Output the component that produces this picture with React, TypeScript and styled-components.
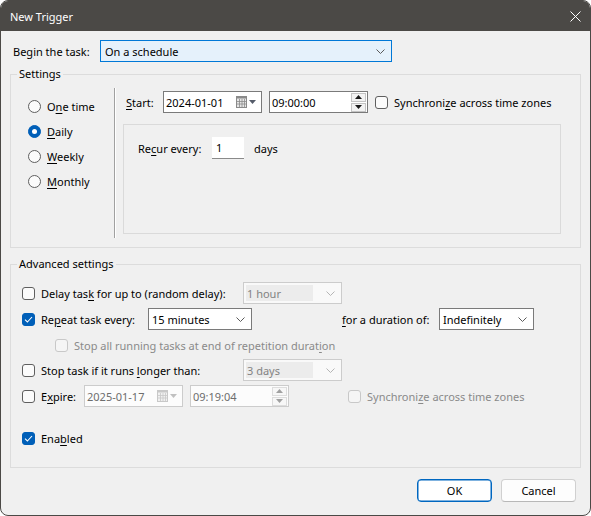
import React from 'react';
import styled, { createGlobalStyle, css } from 'styled-components';

const Global = createGlobalStyle`
  html, body { margin: 0; padding: 0; background: #ffffff; }
  body { font-family: "Noto Sans", "Segoe UI", sans-serif; font-size: 11px; color: #000; }
  * { box-sizing: border-box; }
`;

const Window = styled.div`
  width: 591px;
  height: 516px;
  border: 1px solid #4b4946;
  border-radius: 8px;
  overflow: hidden;
  background: #f0f0f0;
  display: flex;
  flex-direction: column;
`;

const TitleBar = styled.div`
  height: 30px;
  background: #4b4946;
  color: #ffffff;
  display: flex;
  align-items: center;
  justify-content: space-between;
  padding: 0 9px 0 9px;
`;

const Body = styled.div`
  flex: 1;
  padding: 9px 9px 0 9px;
  display: flex;
  flex-direction: column;
`;

const Key = styled.u`
  text-decoration: underline;
  text-decoration-thickness: 1px;
  text-underline-offset: 2px;
`;

const BeginRow = styled.div`
  display: flex;
  align-items: center;
  height: 22px;
  padding-left: 3px;
`;

const Label = styled.span<{ $w?: number; $muted?: boolean; $ml?: number }>`
  display: inline-block;
  white-space: nowrap;
  ${(p) => (p.$w ? `width: ${p.$w}px; flex: none;` : '')}
  margin-left: ${(p) => p.$ml ?? 0}px;
  color: ${(p) => (p.$muted ? '#8a8a8a' : '#000')};
`;

const ComboBox = styled.div<{ $w: number; $variant: 'focus' | 'normal' | 'disabled' }>`
  width: ${(p) => p.$w}px;
  height: 22px;
  flex: none;
  display: flex;
  align-items: center;
  justify-content: space-between;
  padding: 0 6px 0 3px;
  border: 1px solid #7a7a7a;
  background: #ffffff;
  ${(p) =>
    p.$variant === 'focus' &&
    css`
      border-color: #0078d7;
      background: #e5f1fb;
      padding-left: 4px;
    `}
  ${(p) =>
    p.$variant === 'disabled' &&
    css`
      border-color: #cccccc;
      background: #f9f9f9;
      color: #838383;
      padding: 2px 6px 2px 2px;
    `}
`;

const ComboText = styled.span<{ $disabled?: boolean }>`
  white-space: nowrap;
  ${(p) =>
    p.$disabled &&
    css`
      flex: 1;
      align-self: stretch;
      display: flex;
      align-items: center;
      background: #ececec;
      padding-left: 1px;
      margin-right: 13px;
    `}
`;

const Group = styled.fieldset<{ $mt: number }>`
  margin: ${(p) => p.$mt}px 0 0 0;
  padding: 0;
  border: 1px solid #dcdcdc;
  min-width: 0;
`;

const Legend = styled.legend`
  margin-left: 6px;
  padding: 0 2px;
  line-height: 16px;
`;

const SettingsInner = styled.div`
  display: flex;
  padding: 6px 0 9px 0;
`;

const RadioColumn = styled.div`
  width: 103px;
  flex: none;
  padding: 6px 0 0 17px;
  display: flex;
  flex-direction: column;
`;

const RadioRow = styled.div`
  height: 25px;
  display: flex;
  align-items: center;
  gap: 6px;
`;

const RadioCircle = styled.span<{ $on?: boolean }>`
  width: 13px;
  height: 13px;
  flex: none;
  border-radius: 50%;
  border: 1px solid #5f5f5f;
  background: #fbfbfb;
  display: flex;
  align-items: center;
  justify-content: center;
  ${(p) =>
    p.$on &&
    css`
      border-color: #005fb8;
      background: #005fb8;
      &::after {
        content: '';
        width: 5px;
        height: 5px;
        border-radius: 50%;
        background: #ffffff;
      }
    `}
`;

const VSeparator = styled.div`
  width: 2px;
  height: 150px;
  flex: none;
  border-left: 1px solid #a0a0a0;
  border-right: 1px solid #ffffff;
`;

const RightColumn = styled.div`
  flex: 1;
  display: flex;
  flex-direction: column;
  padding: 3px 0 0 10px;
`;

const StartRow = styled.div`
  display: flex;
  align-items: center;
  height: 22px;
`;

const FieldBox = styled.div<{ $w: number; $disabled?: boolean; $ml?: number }>`
  width: ${(p) => p.$w}px;
  height: 22px;
  flex: none;
  margin-left: ${(p) => p.$ml ?? 0}px;
  display: flex;
  align-items: center;
  justify-content: space-between;
  padding: 0 1px 0 2px;
  background: #ffffff;
  border: 1px solid #7a7a7a;
  ${(p) =>
    p.$disabled &&
    css`
      border-color: #cccccc;
      color: #6d6d6d;
      background: #fcfcfc;
    `}
`;

const CalendarButton = styled.span`
  display: flex;
  align-items: center;
  gap: 2px;
  padding-right: 4px;
`;

const Spinner = styled.span`
  display: flex;
  flex-direction: column;
  gap: 1px;
  align-self: center;
`;

const SpinBtn = styled.span<{ $disabled?: boolean }>`
  width: 15px;
  height: 9px;
  border: 1px solid ${(p) => (p.$disabled ? '#dddddd' : '#c4c4c4')};
  background: ${(p) => (p.$disabled ? '#f7f7f7' : '#f3f3f3')};
  display: flex;
  align-items: center;
  justify-content: center;
`;

const CheckRow = styled.label<{ $ml?: number }>`
  display: flex;
  align-items: center;
  gap: 6px;
  margin-left: ${(p) => p.$ml ?? 0}px;
  flex: none;
`;

const CheckBoxBox = styled.span<{ $on?: boolean; $disabled?: boolean }>`
  width: 13px;
  height: 13px;
  flex: none;
  border-radius: 3px;
  border: 1px solid ${(p) => (p.$disabled ? '#c8c8c8' : '#5f5f5f')};
  background: ${(p) => (p.$disabled ? '#f5f5f5' : '#fbfbfb')};
  display: flex;
  align-items: center;
  justify-content: center;
  ${(p) =>
    p.$on &&
    css`
      border-color: #005fb8;
      background: #005fb8;
    `}
`;

const Panel = styled.div`
  width: 438px;
  height: 110px;
  margin: 11px 0 0 -3px;
  border: 1px solid #dadada;
  padding: 12px 0 0 14px;
`;

const RecurRow = styled.div`
  display: flex;
  align-items: center;
  height: 22px;
`;

const SmallInput = styled.div`
  width: 32px;
  height: 22px;
  flex: none;
  background: #ffffff;
  border-bottom: 1px solid #8a8a8a;
  padding: 0 0 0 4px;
  display: flex;
  align-items: center;
  margin-right: 10px;
`;

const AdvancedInner = styled.div`
  display: flex;
  flex-direction: column;
  padding: 10px 0 18px 11px;
`;

const AdvRow = styled.div<{ $mt: number; $indent?: number }>`
  display: flex;
  align-items: center;
  height: 22px;
  margin-top: ${(p) => p.$mt}px;
  padding-left: ${(p) => p.$indent ?? 0}px;
`;

const Footer = styled.div`
  display: flex;
  justify-content: flex-end;
  gap: 9px;
  padding: 11px 5px 0 0;
`;

const Button = styled.button<{ $primary?: boolean }>`
  width: 75px;
  height: 23px;
  font-family: inherit;
  font-size: inherit;
  color: #000;
  background: #fdfdfd;
  border: 1px solid #d0d0d0;
  border-bottom-color: #b8b8b8;
  border-radius: 4px;
  padding: 0;
  ${(p) =>
    p.$primary &&
    css`
      border: 1px solid #0067c0;
      box-shadow: inset 0 0 0 0.5px #0067c0;
      background: #ffffff;
    `}
`;

const Chevron: React.FC<{ color?: string }> = ({ color = '#5a5a5a' }) => (
  <svg width="9" height="5" viewBox="0 0 9 5">
    <path d="M0.5 0.5 L4.5 4.5 L8.5 0.5" fill="none" stroke={color} strokeWidth="1" />
  </svg>
);

const CheckMark = () => (
  <svg width="9" height="7" viewBox="0 0 9 7">
    <path d="M1 3.6 L3.4 6 L8 1" fill="none" stroke="#ffffff" strokeWidth="1.1" />
  </svg>
);

const CalendarIcon: React.FC<{ disabled?: boolean }> = ({ disabled }) => {
  const c = disabled ? '#c8c8c8' : '#8a8a8a';
  const f = disabled ? '#f0f0f0' : '#e6e6e6';
  return (
    <svg width="11" height="12" viewBox="0 0 11 12">
      <rect x="0.5" y="0.5" width="10" height="11" fill={f} stroke={c} />
      <rect x="0.5" y="0.5" width="10" height="2" fill={c} />
      <path d="M3.5 3 V11 M6 3 V11 M8.5 3 V11 M1 5.5 H10 M1 8 H10" stroke={c} strokeWidth="0.8" />
    </svg>
  );
};

const DropTriangle: React.FC<{ disabled?: boolean }> = ({ disabled }) => (
  <svg width="7" height="4" viewBox="0 0 7 4">
    <path d="M0 0 H7 L3.5 4 Z" fill={disabled ? '#c0c0c0' : '#555c6a'} />
  </svg>
);

const SpinArrow: React.FC<{ up?: boolean; disabled?: boolean }> = ({ up, disabled }) => (
  <svg width="7" height="4" viewBox="0 0 7 4">
    <path d={up ? 'M0 4 H7 L3.5 0 Z' : 'M0 0 H7 L3.5 4 Z'} fill={disabled ? '#a0a0a0' : '#1a1a1a'} />
  </svg>
);

const Combo: React.FC<{ w: number; value: string; variant?: 'focus' | 'normal' | 'disabled' }> = ({
  w,
  value,
  variant = 'normal',
}) => (
  <ComboBox $w={w} $variant={variant}>
    <ComboText $disabled={variant === 'disabled'}>{value}</ComboText>
    <Chevron color={variant === 'disabled' ? '#b5b5b5' : '#5a5a5a'} />
  </ComboBox>
);

const DateField: React.FC<{ value: string; disabled?: boolean; ml?: number }> = ({ value, disabled, ml }) => (
  <FieldBox $w={99} $disabled={disabled} $ml={ml}>
    <span>{value}</span>
    <CalendarButton>
      <CalendarIcon disabled={disabled} />
      <DropTriangle disabled={disabled} />
    </CalendarButton>
  </FieldBox>
);

const TimeField: React.FC<{ value: string; disabled?: boolean; ml?: number }> = ({ value, disabled, ml }) => (
  <FieldBox $w={99} $disabled={disabled} $ml={ml}>
    <span>{value}</span>
    <Spinner>
      <SpinBtn $disabled={disabled}>
        <SpinArrow up disabled={disabled} />
      </SpinBtn>
      <SpinBtn $disabled={disabled}>
        <SpinArrow disabled={disabled} />
      </SpinBtn>
    </Spinner>
  </FieldBox>
);

const Check: React.FC<{ on?: boolean; disabled?: boolean; ml?: number; children: React.ReactNode; w?: number }> = ({
  on,
  disabled,
  ml,
  children,
  w,
}) => (
  <CheckRow $ml={ml}>
    <CheckBoxBox $on={on} $disabled={disabled}>
      {on && <CheckMark />}
    </CheckBoxBox>
    <Label $w={w} $muted={disabled}>
      {children}
    </Label>
  </CheckRow>
);

const Radio: React.FC<{ on?: boolean; children: React.ReactNode }> = ({ on, children }) => (
  <RadioRow>
    <RadioCircle $on={on} />
    <span>{children}</span>
  </RadioRow>
);

export default function App() {
  return (
    <>
      <Global />
      <Window>
        <TitleBar>
          <span>New Trigger</span>
          <svg width="11" height="11" viewBox="0 0 11 11">
            <path d="M0.5 0.5 L10.5 10.5 M10.5 0.5 L0.5 10.5" stroke="#ffffff" strokeWidth="1" />
          </svg>
        </TitleBar>
        <Body>
          <BeginRow>
            <Label $w={87}>
              Be<Key>g</Key>in the task:
            </Label>
            <Combo w={292} value="On a schedule" variant="focus" />
          </BeginRow>

          <Group $mt={4}>
            <Legend>Settings</Legend>
            <SettingsInner>
              <RadioColumn>
                <Radio>
                  O<Key>n</Key>e time
                </Radio>
                <Radio on>
                  <Key>D</Key>aily
                </Radio>
                <Radio>
                  <Key>W</Key>eekly
                </Radio>
                <Radio>
                  <Key>M</Key>onthly
                </Radio>
              </RadioColumn>
              <VSeparator />
              <RightColumn>
                <StartRow>
                  <Label $w={37}>
                    <Key>S</Key>tart:
                  </Label>
                  <DateField value="2024-01-01" />
                  <TimeField value="09:00:00" ml={7} />
                  <Check ml={7}>
                    Synchroni<Key>z</Key>e across time zones
                  </Check>
                </StartRow>
                <Panel>
                  <RecurRow>
                    <Label $w={74}>
                      Re<Key>c</Key>ur every:
                    </Label>
                    <SmallInput>1</SmallInput>
                    <span>days</span>
                  </RecurRow>
                </Panel>
              </RightColumn>
            </SettingsInner>
          </Group>

          <Group $mt={8}>
            <Legend>Advanced settings</Legend>
            <AdvancedInner>
              <AdvRow $mt={0}>
                <Check w={202}>
                  Delay tas<Key>k</Key> for up to (random delay):
                </Check>
                <Combo w={99} value="1 hour" variant="disabled" />
              </AdvRow>
              <AdvRow $mt={4}>
                <Check on w={107}>
                  Re<Key>p</Key>eat task every:
                </Check>
                <Combo w={104} value="15 minutes" />
                <Label $w={97} $ml={90}>
                  <Key>f</Key>or a duration of:
                </Label>
                <Combo w={95} value="Indefinitely" />
              </AdvRow>
              <AdvRow $mt={4} $indent={33}>
                <Check disabled>
                  Stop all running tasks at end of repetition durat<Key>i</Key>on
                </Check>
              </AdvRow>
              <AdvRow $mt={3}>
                <Check w={202}>
                  Stop task if it runs <Key>l</Key>onger than:
                </Check>
                <Combo w={99} value="3 days" variant="disabled" />
              </AdvRow>
              <AdvRow $mt={4}>
                <Check w={43}>
                  E<Key>x</Key>pire:
                </Check>
                <DateField value="2025-01-17" disabled />
                <TimeField value="09:19:04" disabled ml={7} />
                <Check disabled ml={59}>
                  Synchroni<Key>z</Key>e across time zones
                </Check>
              </AdvRow>
              <AdvRow $mt={20}>
                <Check on>
                  Ena<Key>b</Key>led
                </Check>
              </AdvRow>
            </AdvancedInner>
          </Group>

          <Footer>
            <Button $primary>OK</Button>
            <Button>Cancel</Button>
          </Footer>
        </Body>
      </Window>
    </>
  );
}
